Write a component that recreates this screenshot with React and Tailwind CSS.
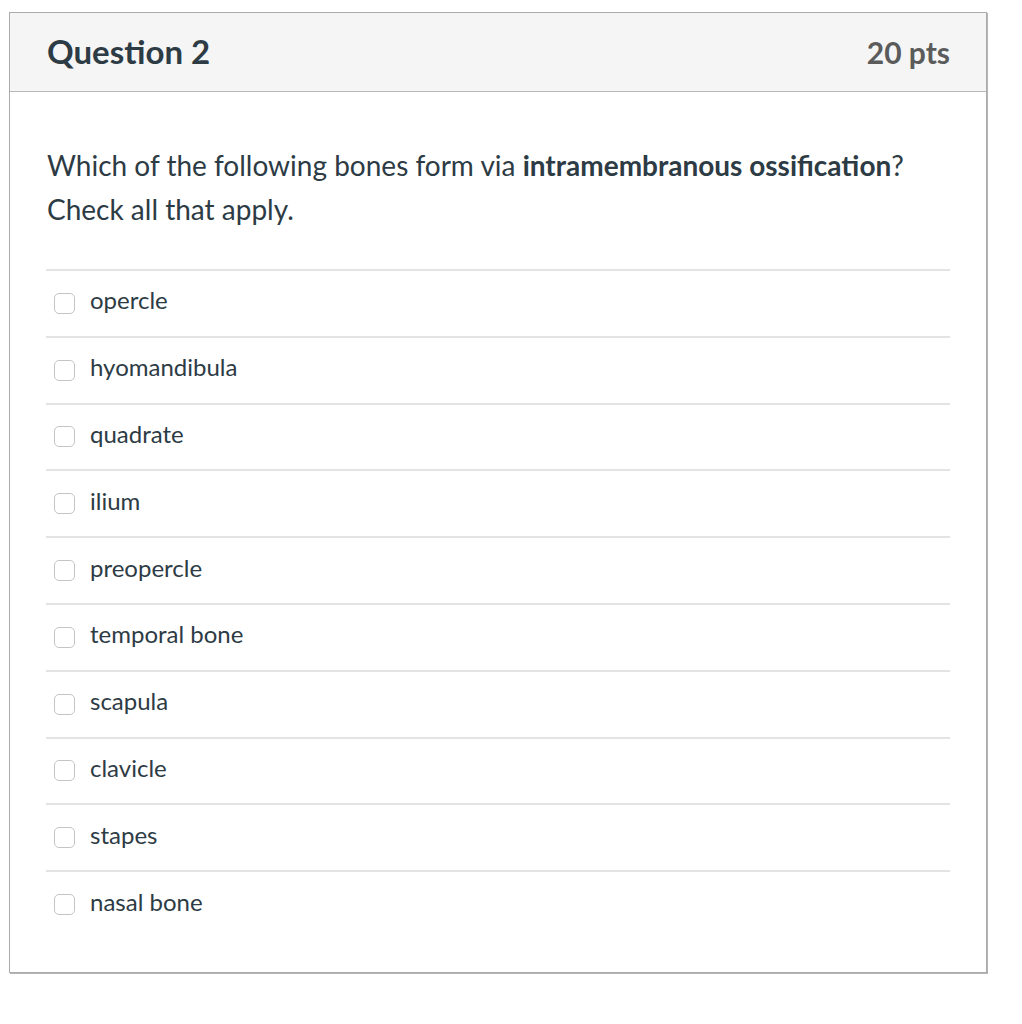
import React from "react";

const answers = [
  "opercle",
  "hyomandibula",
  "quadrate",
  "ilium",
  "preopercle",
  "temporal bone",
  "scapula",
  "clavicle",
  "stapes",
  "nasal bone",
];

export default function App() {
  return (
    <div
      className="min-h-[1024px] bg-white pt-[12px] pl-[9px]"
      style={{ fontFamily: "Lato, 'Open Sans', sans-serif" }}
    >
      <div className="w-[978px] border border-[#ababab] shadow-[1px_1px_0_#b5b5b5]">
        <div className="h-[79px] bg-[#f5f5f5] border-b border-[#b8b8b8] flex items-center justify-between pl-[37px] pr-[36px]">
          <div className="text-[33px] font-bold text-[#2d3b45]">Question 2</div>
          <div className="text-[30px] font-bold text-[#5b5b5b]">20 pts</div>
        </div>
        <div className="pl-[36px] pr-[36px] pt-[51px] pb-[35px]">
          <div className="pl-[1px] text-[28px] leading-[44px] text-[#2d3b45]">
            Which of the following bones form via{" "}
            <strong className="font-bold">intramembranous ossification</strong>?
            <br />
            Check all that apply.
          </div>
          <div className="mt-[38px]">
            {answers.map((a) => (
              <div
                key={a}
                className="h-[66.8px] border-t-2 border-[#e3e3e3] flex items-center pl-[8px]"
              >
                <span className="w-[21px] h-[21px] rounded-[5px] border border-[#c4c4c4] bg-white shrink-0" />
                <span className="ml-[15px] mb-[6px] text-[24px] text-[#2d3b45]">{a}</span>
              </div>
            ))}
          </div>
        </div>
      </div>
    </div>
  );
}
